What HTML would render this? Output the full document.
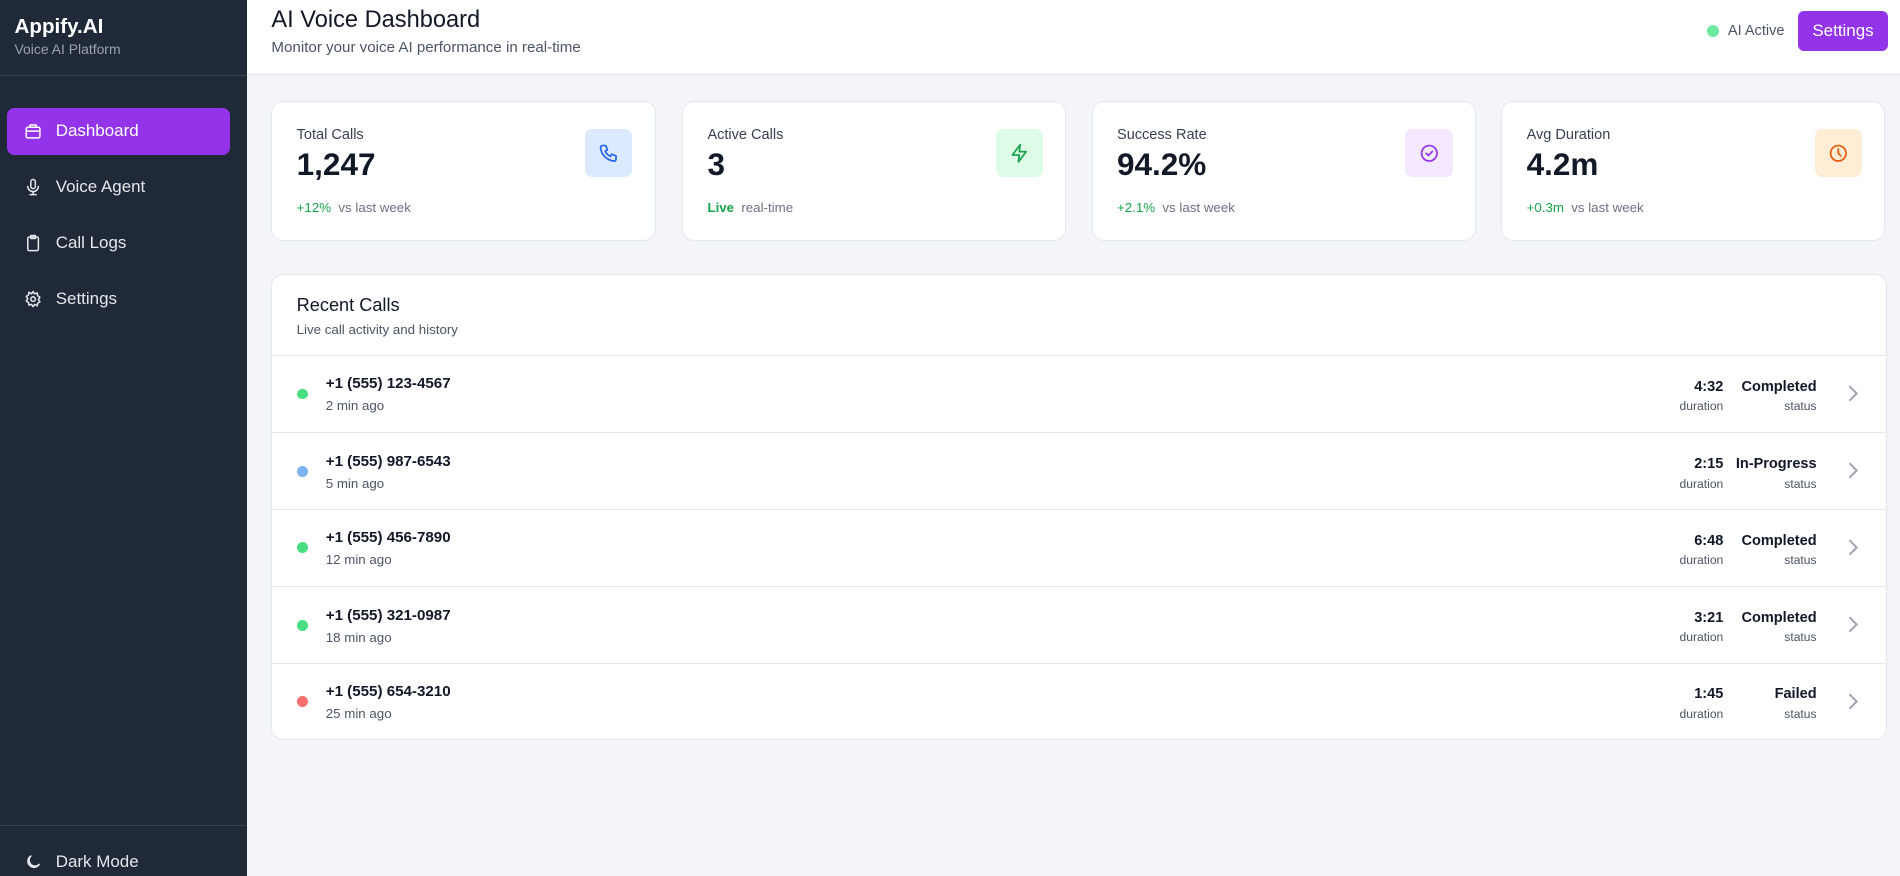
<!DOCTYPE html>
<html><head><meta charset="utf-8"><style>
html{zoom:1.21173;background:#f3f5f8;height:723px;overflow:hidden}
*{box-sizing:border-box;margin:0;padding:0}
body{width:1568px;height:723px;overflow:hidden;font-family:"Liberation Sans","DejaVu Sans",sans-serif;background:#f3f5f8;position:relative;color:#111827}
.sb{position:absolute;left:0;top:0;width:204px;height:723px;background:#1f2937}
.logo{position:absolute;left:12px;top:12px;color:#fff;font-weight:bold;font-size:17px}
.sub{position:absolute;left:12px;top:34px;color:#9ca3af;font-size:11.5px}
.hr{position:absolute;left:0;width:204px;height:1px;background:#374151}
.nav{position:absolute;left:6px;width:184px;height:39px;border-radius:6px;color:#e5e7eb;font-size:14px;display:flex;align-items:center;padding-left:14px}
.nav svg{width:15px;height:15px;margin-right:11px;fill:none;stroke:currentColor;stroke-width:2;stroke-linecap:round;stroke-linejoin:round}
.nav.act{background:#9333ea;color:#fff}
.hd{position:absolute;left:204px;top:0;right:0;height:62px;background:#fff;border-bottom:1px solid #e5e7eb}
.hd h1{position:absolute;left:20px;top:6px;font-size:19.5px;font-weight:normal;color:#111827}
.hd p{position:absolute;left:20px;top:32px;font-size:12.5px;color:#4b5563}
.st{position:absolute;left:1205px;top:19px;font-size:12px;color:#4b5563;display:flex;align-items:center}
.st i{width:10px;height:10px;border-radius:50%;background:#6ee7a0;margin-right:7px}
.btn{position:absolute;left:1280px;top:9px;width:74px;height:33px;background:#9333ea;border-radius:5px;color:#fff;font-size:14px;display:flex;align-items:center;justify-content:center}
.card{position:absolute;top:83px;width:317px;height:116px;background:#fff;border:1px solid #e2e8f0;border-radius:10px}
.card .l{position:absolute;left:20px;top:21px;font-size:12px;color:#374151}
.card .v{position:absolute;left:20px;top:37px;font-size:26px;font-weight:bold;color:#111827}
.card .f{position:absolute;left:20px;top:81px;font-size:11px;color:#6b7280}
.card .f b{color:#16a34a;font-weight:normal;margin-right:6px}
.card .ic{position:absolute;left:258px;top:23px;width:39px;height:39px;border-radius:6px;display:flex;align-items:center;justify-content:center}
.ic svg{width:17px;height:17px;fill:none;stroke-width:2;stroke-linecap:round;stroke-linejoin:round}
.pan{position:absolute;left:224px;top:226px;width:1333px;height:385px;background:#fff;border:1px solid #e2e8f0;border-radius:10px;overflow:hidden}
.pan h2{position:absolute;left:20px;top:17px;font-size:15px;font-weight:normal;color:#111827}
.pan .s{position:absolute;left:20px;top:39px;font-size:11px;color:#4b5563}
.row{position:absolute;left:0;width:100%;height:64px;border-top:1px solid #e5e7eb}
.row .d{position:absolute;left:20px;top:27px;width:9px;height:9px;border-radius:50%}
.row .p{position:absolute;left:44px;top:16px;font-size:12.5px;color:#111827;font-weight:bold}
.row .t{position:absolute;left:44px;top:35px;font-size:11px;color:#4b5563}
.row .a{position:absolute;right:134px;top:18px;text-align:right;font-size:12px;font-weight:bold;color:#111827;line-height:16px}
.row .b{position:absolute;right:57px;top:18px;text-align:right;font-size:12px;font-weight:bold;color:#111827;line-height:16px}
.row small{display:block;font-size:10px;font-weight:normal;color:#4b5563}
.row svg{position:absolute;right:22px;top:24px;width:10px;height:14px;fill:none;stroke:#9ca3af;stroke-width:1.6}
</style></head><body>
<div class="sb">
<div class="logo">Appify.AI</div>
<div class="sub">Voice AI Platform</div>
<div class="hr" style="top:62px"></div>
<div class="nav act" style="top:89px"><svg viewBox="0 0 24 24"><rect x="3" y="7" width="18" height="14" rx="2"/><path d="M8 7V4h8v3M3 12h18"/></svg>Dashboard</div>
<div class="nav" style="top:135px"><svg viewBox="0 0 24 24"><rect x="9" y="2" width="6" height="12" rx="3"/><path d="M5 11a7 7 0 0 0 14 0M12 18v4M8 22h8"/></svg>Voice Agent</div>
<div class="nav" style="top:181px"><svg viewBox="0 0 24 24"><rect x="5" y="4" width="14" height="18" rx="2"/><path d="M9 2h6v4H9z"/></svg>Call Logs</div>
<div class="nav" style="top:227px"><svg viewBox="0 0 24 24"><circle cx="12" cy="12" r="3"/><path d="M12 2l2 3 3.5-1 .5 3.5 3 2-2 3 2 3-3 2-.5 3.5L14 19l-2 3-2-3-3.5 1L6 16.5l-3-2 2-3-2-3 3-2L6.5 3 10 5z"/></svg>Settings</div>
<div class="hr" style="top:681px"></div>
<div class="nav" style="top:692px"><svg viewBox="0 0 24 24"><path d="M20 15A8 8 0 1 1 9 4a7 7 0 0 0 11 11z"/></svg>Dark Mode</div>
</div>
<div class="hd"><h1>AI Voice Dashboard</h1><p>Monitor your voice AI performance in real-time</p>
<div class="st"><i></i>AI Active</div><div class="btn">Settings</div></div>

<div class="card" style="left:224px"><div class="l">Total Calls</div><div class="v">1,247</div><div class="f"><b>+12%</b>vs last week</div>
<div class="ic" style="background:#dbeafe"><svg viewBox="0 0 24 24" stroke="#2563eb"><path d="M5 3h4l2 5-2.5 1.5a11 11 0 0 0 6 6L16 13l5 2v4a2 2 0 0 1-2 2A17 17 0 0 1 3 5a2 2 0 0 1 2-2z"/></svg></div></div>
<div class="card" style="left:563px"><div class="l">Active Calls</div><div class="v">3</div><div class="f"><b style="font-weight:bold">Live</b>real-time</div>
<div class="ic" style="background:#dcfce7"><svg viewBox="0 0 24 24" stroke="#16a34a"><path d="M13 2L4 14h8l-1 8 9-12h-8z"/></svg></div></div>
<div class="card" style="left:901px"><div class="l">Success Rate</div><div class="v">94.2%</div><div class="f"><b>+2.1%</b>vs last week</div>
<div class="ic" style="background:#f3e8ff"><svg viewBox="0 0 24 24" stroke="#9333ea"><circle cx="12" cy="12" r="9"/><path d="M8.5 12l2.5 2.5 4.5-4.5"/></svg></div></div>
<div class="card" style="left:1239px"><div class="l">Avg Duration</div><div class="v">4.2m</div><div class="f"><b>+0.3m</b>vs last week</div>
<div class="ic" style="background:#ffedd5"><svg viewBox="0 0 24 24" stroke="#ea580c"><circle cx="12" cy="12" r="9"/><path d="M12 7v5l3 3"/></svg></div></div>

<div class="pan"><h2>Recent Calls</h2><div class="s">Live call activity and history</div>
<div class="row" style="top:66px"><i class="d" style="background:#4ade80"></i><div class="p">+1 (555) 123-4567</div><div class="t">2 min ago</div><div class="a">4:32<small>duration</small></div><div class="b">Completed<small>status</small></div><svg viewBox="0 0 10 14"><path d="M2 1l6 6-6 6"/></svg></div>
<div class="row" style="top:130px"><i class="d" style="background:#7fb2f0"></i><div class="p">+1 (555) 987-6543</div><div class="t">5 min ago</div><div class="a">2:15<small>duration</small></div><div class="b">In-Progress<small>status</small></div><svg viewBox="0 0 10 14"><path d="M2 1l6 6-6 6"/></svg></div>
<div class="row" style="top:193px"><i class="d" style="background:#4ade80"></i><div class="p">+1 (555) 456-7890</div><div class="t">12 min ago</div><div class="a">6:48<small>duration</small></div><div class="b">Completed<small>status</small></div><svg viewBox="0 0 10 14"><path d="M2 1l6 6-6 6"/></svg></div>
<div class="row" style="top:257px"><i class="d" style="background:#4ade80"></i><div class="p">+1 (555) 321-0987</div><div class="t">18 min ago</div><div class="a">3:21<small>duration</small></div><div class="b">Completed<small>status</small></div><svg viewBox="0 0 10 14"><path d="M2 1l6 6-6 6"/></svg></div>
<div class="row" style="top:320px"><i class="d" style="background:#f87171"></i><div class="p">+1 (555) 654-3210</div><div class="t">25 min ago</div><div class="a">1:45<small>duration</small></div><div class="b">Failed<small>status</small></div><svg viewBox="0 0 10 14"><path d="M2 1l6 6-6 6"/></svg></div>
</div>
</body></html>
